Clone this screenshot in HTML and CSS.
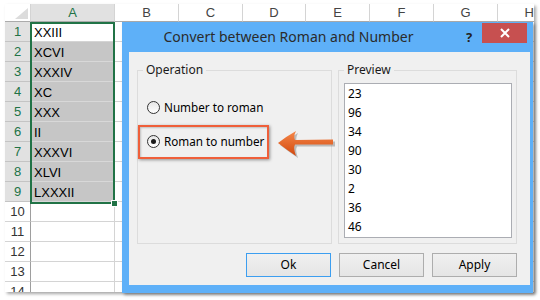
FILE: index.html
```html
<!DOCTYPE html>
<html>
<head>
<meta charset="utf-8">
<link rel="stylesheet" href="styles.css">
</head>
<body>
<div class="sheet">
  <div class="colhead">
    <div class="corner"><span class="tri"></span></div>
    <div class="ch ch-a sel">A</div>
    <div class="ch w64">B</div>
    <div class="ch w64">C</div>
    <div class="ch w63">D</div>
    <div class="ch w64">E</div>
    <div class="ch w64">F</div>
    <div class="ch w64">G</div>
    <div class="ch wh">H</div>
  </div>
  <div class="row"><div class="rh sel">1</div><div class="cell active">XXIII</div><div class="rest"></div></div>
  <div class="row"><div class="rh sel">2</div><div class="cell shade">XCVI</div><div class="rest"></div></div>
  <div class="row"><div class="rh sel">3</div><div class="cell shade">XXXIV</div><div class="rest"></div></div>
  <div class="row"><div class="rh sel">4</div><div class="cell shade">XC</div><div class="rest"></div></div>
  <div class="row"><div class="rh sel">5</div><div class="cell shade">XXX</div><div class="rest"></div></div>
  <div class="row"><div class="rh sel">6</div><div class="cell shade">II</div><div class="rest"></div></div>
  <div class="row"><div class="rh sel">7</div><div class="cell shade">XXXVI</div><div class="rest"></div></div>
  <div class="row"><div class="rh sel">8</div><div class="cell shade">XLVI</div><div class="rest"></div></div>
  <div class="row"><div class="rh sel">9</div><div class="cell shade">LXXXII</div><div class="rest"></div></div>
  <div class="row"><div class="rh">10</div><div class="cell"></div><div class="rest"></div></div>
  <div class="row"><div class="rh">11</div><div class="cell"></div><div class="rest"></div></div>
  <div class="row"><div class="rh">12</div><div class="cell"></div><div class="rest"></div></div>
  <div class="row"><div class="rh">13</div><div class="cell"></div><div class="rest"></div></div>
  <div class="row"><div class="rh">14</div><div class="cell"></div><div class="rest"></div></div>
  <div class="selection"><span class="handle"></span></div>
</div>

<div class="dialog">
  <div class="titlebar">
    <div class="title">Convert between Roman and Number</div>
    <div class="help">?</div>
    <div class="close">
      <svg width="12" height="12" viewBox="0 0 12 12"><path d="M2 2 L10 10 M10 2 L2 10" stroke="#fff" stroke-width="2" fill="none"/></svg>
    </div>
  </div>
  <div class="content">
    <div class="groups">
      <fieldset class="group op">
        <legend>Operation</legend>
        <div class="radios">
          <label class="radio"><span class="circle"></span>Number to roman</label>
          <label class="radio"><span class="circle checked"></span>Roman to number</label>
        </div>
      </fieldset>
      <fieldset class="group preview">
        <legend>Preview</legend>
        <div class="listwrap">
          <div class="listbox">
            <div>23</div><div>96</div><div>34</div><div>90</div><div>30</div><div>2</div><div>36</div><div>46</div>
          </div>
        </div>
      </fieldset>
    </div>
    <div class="buttons">
      <div class="btn default">Ok</div>
      <div class="btn">Cancel</div>
      <div class="btn">Apply</div>
    </div>
  </div>
  <div class="highlight"></div>
  <svg class="arrow" width="64" height="34" viewBox="0 0 64 34">
    <defs>
      <linearGradient id="ag" x1="0" y1="0" x2="0" y2="1">
        <stop offset="0" stop-color="#f5884a"/>
        <stop offset="1" stop-color="#d2480e"/>
      </linearGradient>
    </defs>
    <path d="M6 17 Q15 10 24 5 Q21 11 23 14 L61 13.5 L61 18.5 L23 18.5 Q21 22 24 30 Q15 24 6 17 Z" fill="#7a7a7a" opacity="0.45"/>
    <path d="M4 15 Q13 8 22 3 Q19 9 21 12 L59 11.5 L59 16.5 L21 16.5 Q19 20 22 28 Q13 22 4 15 Z" fill="url(#ag)"/>
  </svg>
</div>
</body>
</html>
```
FILE: styles.css
```css
html, body {
  margin: 0;
  padding: 0;
  background: #ffffff;
}
body {
  width: 540px;
  height: 300px;
  position: relative;
  overflow: hidden;
  padding: 4px 0 0 5px;
  box-sizing: border-box;
  font-family: "Liberation Sans", Arial, sans-serif;
}
.sheet {
  position: relative;
  width: 529px;
  height: 288px;
  overflow: hidden;
  background: #fff;
  box-shadow: 2px 2px 3px rgba(0,0,0,0.35);
  font-size: 13px;
  color: #000;
}
.colhead {
  display: flex;
  height: 18px;
}
.corner {
  width: 26px;
  flex: none;
  box-sizing: border-box;
  border-right: 1px solid #d4d4d4;
  border-bottom: 1px solid #ababab;
  background: #fff;
  position: relative;
}
.tri {
  position: absolute;
  right: 2px;
  bottom: 2px;
  width: 0;
  height: 0;
  border-left: 13px solid transparent;
  border-bottom: 11px solid #dcdcdc;
}
.ch {
  flex: none;
  box-sizing: border-box;
  border-right: 1px solid #d4d4d4;
  border-bottom: 1px solid #ababab;
  text-align: center;
  line-height: 18px;
  color: #444;
  background: #fff;
}
.ch-a { width: 84px; }
.w64 { width: 64px; }
.w63 { width: 63px; }
.wh { width: 36px; border-right: none; text-align: right; }
.ch.sel {
  background: #e1e1e1;
  color: #217346;
}
.row {
  display: flex;
  height: 20px;
}
.rh {
  width: 26px;
  flex: none;
  box-sizing: border-box;
  border-right: 1px solid #9e9e9e;
  border-bottom: 1px solid #d4d4d4;
  text-align: center;
  line-height: 20px;
  color: #333;
  background: #fff;
}
.rh.sel {
  background: #e1e1e1;
  color: #217346;
  border-bottom-color: #c4c4c4;
}
.cell {
  width: 84px;
  flex: none;
  box-sizing: border-box;
  border-right: 1px solid #d4d4d4;
  border-bottom: 1px solid #d4d4d4;
  padding: 3px 0 0 3px;
  line-height: 15px;
  white-space: nowrap;
}
.cell.shade {
  background: #c6c6c6;
  border-bottom-color: #d8d8d8;
}
.rest {
  flex: 1;
  border-bottom: 1px solid #d4d4d4;
}
.selection {
  position: absolute;
  left: 25px;
  top: 18px;
  width: 85px;
  height: 182px;
  box-sizing: border-box;
  border: 2px solid #217346;
}
.handle {
  position: absolute;
  right: -5px;
  bottom: -5px;
  width: 5px;
  height: 5px;
  background: #217346;
  border: 1px solid #fff;
}

/* dialog */
.dialog {
  position: absolute;
  left: 122px;
  top: 22px;
  width: 411px;
  height: 271px;
  box-sizing: border-box;
  background: #5eb0f8;
  padding: 0 3px 8px 7px;
  display: flex;
  flex-direction: column;
  box-shadow: 2px 2px 3px rgba(0,0,0,0.35);
  font-family: "Noto Sans", "Open Sans", sans-serif;
  font-size: 12px;
  color: #000;
}
.titlebar {
  height: 30px;
  flex: none;
  display: flex;
  align-items: flex-start;
}
.title {
  flex: 1;
  text-align: center;
  line-height: 30px;
  font-size: 14px;
  color: #2b2b2b;
  padding-right: 8px;
}
.help {
  width: 26px;
  text-align: center;
  font-weight: bold;
  font-size: 13px;
  line-height: 30px;
  color: #222;
}
.close {
  width: 45px;
  height: 20px;
  margin: 1px 3px 0 0;
  background: #c75050;
  display: flex;
  align-items: center;
  justify-content: center;
}
.close svg { display: block; }
.content {
  flex: 1;
  background: #f0f0f0;
  padding: 10px 13px 8px 8px;
  display: flex;
  flex-direction: column;
  gap: 9px;
  min-height: 0;
}
.groups {
  flex: 1;
  display: flex;
  gap: 6px;
  min-height: 0;
}
.group {
  margin: 0;
  padding: 0;
  border: 1px solid #dcdcdc;
  min-width: 0;
  box-sizing: border-box;
  display: flex;
  flex-direction: column;
}
.group legend {
  margin-left: 5px;
  padding: 0 3px;
  line-height: 16px;
  font-size: 12px;
  color: #1a1a1a;
}
.op {
  width: 195px;
  flex: none;
}
.radios {
  padding: 19px 0 0 9px;
  display: flex;
  flex-direction: column;
  gap: 14px;
}
.radio {
  display: flex;
  align-items: center;
  height: 20px;
  gap: 4px;
  font-size: 11.7px;
}
.circle {
  width: 13px;
  height: 13px;
  box-sizing: border-box;
  border-radius: 50%;
  border: 1px solid #333;
  background: linear-gradient(#e6e6e6, #ffffff);
  display: flex;
  align-items: center;
  justify-content: center;
}
.circle.checked::after {
  content: "";
  width: 5px;
  height: 5px;
  border-radius: 50%;
  background: #1a1a1a;
}
.preview {
  width: 179px;
  flex: none;
}
.listwrap {
  flex: 1;
  display: flex;
  padding: 5px 4px 5px 5px;
}
.listbox {
  flex: 1;
  background: #fff;
  border: 1px solid #abadb3;
  padding: 0 3px;
  font-size: 12px;
  line-height: 19px;
}
.buttons {
  flex: none;
  display: flex;
  justify-content: flex-end;
  gap: 8px;
}
.btn {
  width: 85px;
  height: 24px;
  box-sizing: border-box;
  border: 1px solid #adadad;
  background: linear-gradient(#f0f0f0, #e5e5e5);
  text-align: center;
  line-height: 22px;
  font-size: 12px;
}
.btn.default {
  border-color: #3c9ef0;
}
.highlight {
  position: absolute;
  left: 16px;
  top: 103px;
  width: 131px;
  height: 34px;
  box-sizing: border-box;
  border: 2px solid #ef5f3a;
  box-shadow: 1px 1px 3px rgba(0,0,0,0.4), inset 1px 1px 2px rgba(0,0,0,0.2);
}
.arrow {
  position: absolute;
  left: 152px;
  top: 106px;
}
```
